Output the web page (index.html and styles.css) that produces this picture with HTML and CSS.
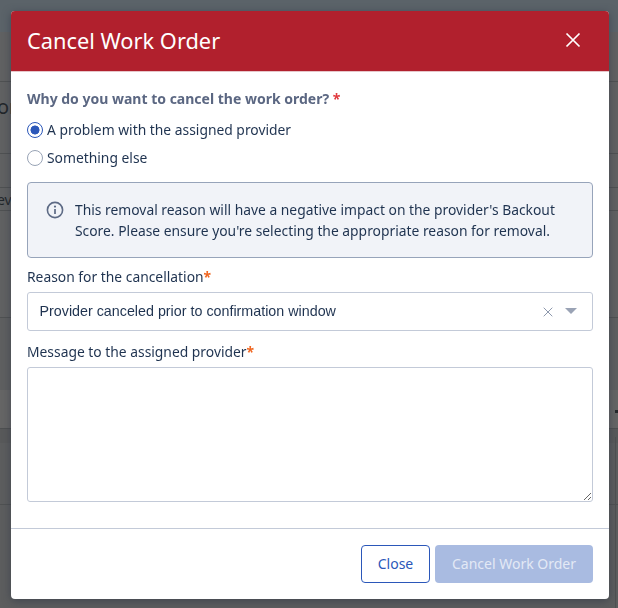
FILE: index.html
```html
<!DOCTYPE html>
<html lang="en">
<head>
<meta charset="utf-8">
<title>Cancel Work Order</title>
<link rel="stylesheet" href="styles.css">
</head>
<body>
<div class="backdrop">
  <div class="bg-row bg-top"></div>
  <div class="bg-row bg-a"></div>
  <div class="bg-row bg-b"><span class="bg-text bg-text-or">or</span></div>
  <div class="bg-row bg-c"></div>
  <div class="bg-row bg-d"><span class="bg-text bg-text-ev">ev</span></div>
  <div class="bg-row bg-e"></div>
  <div class="bg-row bg-f"></div>
  <div class="bg-row bg-g"></div>
  <div class="bg-row bg-h"></div>
  <div class="bg-row bg-i"></div>
  <div class="bg-row bg-j"></div>
  <div class="bg-rule"></div>
  <div class="bg-mark"></div>
</div>
<div class="modal">
  <header class="modal-header">
    <h1 class="modal-title">Cancel Work Order</h1>
    <button class="icon-btn" type="button" aria-label="Close">
      <svg width="16" height="16" viewBox="0 0 16 16"><path d="M1.5 1.5l13 13M14.5 1.5l-13 13" stroke="#fff" stroke-width="1.7" fill="none"/></svg>
    </button>
  </header>
  <div class="modal-body">
    <div class="question">Why do you want to cancel the work order? <span class="req-red">*</span></div>
    <label class="radio-row radio-first"><input class="radio" type="radio" name="why" checked><span>A problem with the assigned provider</span></label>
    <label class="radio-row"><input class="radio" type="radio" name="why"><span>Something else</span></label>
    <div class="notice">
      <svg class="notice-icon" width="18" height="18" viewBox="0 0 18 18"><circle cx="9" cy="9" r="7.6" fill="none" stroke="#5d6a85" stroke-width="1.6"/><circle cx="9" cy="5.6" r="1.1" fill="#5d6a85"/><path d="M9 8v5" stroke="#5d6a85" stroke-width="1.7" fill="none"/></svg>
      <p class="notice-text">This removal reason will have a negative impact on the provider's Backout Score. Please ensure you're selecting the appropriate reason for removal.</p>
    </div>
    <div class="field-label label-reason">Reason for the cancellation<span class="req">*</span></div>
    <div class="select">
      <span class="select-value">Provider canceled prior to confirmation window</span>
      <svg class="select-clear" width="10" height="10" viewBox="0 0 10 10"><path d="M.7.7l8.6 8.6M9.3.7L.7 9.3" stroke="#8d98ad" stroke-width="1" fill="none"/></svg>
      <svg class="select-caret" width="12" height="6" viewBox="0 0 12 6"><path d="M0 0h12L6 6z" fill="#9aa3b5"/></svg>
    </div>
    <div class="field-label label-message">Message to the assigned provider<span class="req">*</span></div>
    <textarea class="message"></textarea>
  </div>
  <footer class="modal-footer">
    <button class="btn btn-outline" type="button">Close</button>
    <button class="btn btn-disabled" type="button">Cancel Work Order</button>
  </footer>
</div>
</body>
</html>
```
FILE: styles.css
```css
* { box-sizing: border-box; }
html, body { margin: 0; height: 100%; overflow: hidden; }
body { font-family: "Noto Sans", sans-serif; font-size: 13.85px; color: #1f3350; background: #5f6061; }

.backdrop { position: relative; display: flex; flex-direction: column; height: 608px; }
.bg-row { flex: none; overflow: hidden; border-bottom: 1px solid #4f5152; background: #606162; }
.bg-top { height: 32px; background: #5b6369; border-bottom: 0; }
.bg-a { height: 50px; }
.bg-b { height: 72px; padding-top: 13px; }
.bg-c { height: 34px; }
.bg-d { height: 23px; padding-top: 2px; }
.bg-e { height: 107px; }
.bg-f { height: 72px; border-bottom: 0; background: #5e5f60; }
.bg-g { height: 39px; background: #656565; border-bottom: 1px solid #4e5051; }
.bg-h { height: 14px; border-bottom: 0; background: #58595a; }
.bg-i { height: 62px; background: #5c5d5e; }
.bg-j { flex: 1; border-bottom: 0; background: #5c5d5e; }
.bg-text { display: block; color: #22262a; }
.bg-text-or { margin-left: -3px; font-size: 20px; line-height: 24px; }
.bg-text-ev { margin-left: -3px; font-size: 14px; line-height: 20px; }
.bg-rule { position: absolute; left: 615px; top: 437px; bottom: 0; width: 1px; background: #4f5152; }
.bg-mark { position: absolute; left: 615px; top: 410px; width: 3px; height: 3px; background: #26282b; }

.modal {
  position: fixed; left: 11px; top: 11px; width: 598px; height: 588px;
  display: flex; flex-direction: column;
  background: #fff; border-radius: 4px; overflow: hidden;
  box-shadow: 0 2px 8px rgba(40, 50, 65, .55);
}
.modal-header {
  flex: none; height: 61px; padding: 0 16px;
  display: flex; align-items: center; justify-content: space-between;
  background: #b1202d; border-bottom: 1px solid #e6c6ca;
}
.modal-title { margin: 0; font-size: 21.8px; font-weight: 400; line-height: 28px; color: #fff; }
.icon-btn { border: 0; padding: 0; background: none; margin: 0 12px 3px 0; width: 16px; height: 16px; display: block; }
.icon-btn svg { display: block; }

.modal-body { flex: 1; padding: 16px 16px 0; display: flex; flex-direction: column; }
.question { font-size: 14px; font-weight: 700; color: #5b6782; line-height: 20px; height: 20px; margin-bottom: 11px; margin-top: 1px; }
.req-red { color: #e0393e; font-weight: 700; }
.req { color: #f0651f; font-weight: 700; }

.radio-row { display: flex; align-items: center; gap: 4px; height: 20px; line-height: 20px; margin-bottom: 8px; }
.radio {
  appearance: none; margin: 0; width: 16px; height: 16px; flex: none;
  border: 1.5px solid #98a3b5; border-radius: 50%; background: #fff;
}
.radio:checked { border: 1.5px solid #2b57b9; background: radial-gradient(circle, #2b57b9 0 4.2px, #fff 4.8px); }

.notice {
  display: flex; align-items: flex-start; gap: 11px; height: 76px;
  margin-top: 6px; padding: 17px 18px 16px 18px;
  background: #f1f3f8; border: 1px solid #97a4ba; border-radius: 4px;
}
.notice-icon { flex: none; margin-top: 1px; }
.notice-text { margin: -1px 0 0; line-height: 21px; }

.field-label { line-height: 20px; height: 20px; }
.label-reason { margin-top: 9px; margin-bottom: 5px; }
.label-message { margin-top: 11px; margin-bottom: 5px; }

.select {
  display: flex; align-items: center; height: 39px; padding: 0 14px 0 11.5px;
  border: 1px solid #c3cad8; border-radius: 3px; background: #fff;
}
.select-value { flex: 1; margin-top: -1px; font-family: "Liberation Sans", Arial, sans-serif; font-size: 14.3px; }
.select-clear { flex: none; margin-right: 12px; }
.select-caret { flex: none; margin-bottom: 2px; margin-right: 1px; }

.message {
  display: block; width: 100%; height: 135px; margin: 0; padding: 8px 12px;
  border: 1px solid #c3cad8; border-radius: 3px; background: #fff; outline: 0;
  font: inherit; color: inherit; resize: vertical;
}

.modal-footer {
  flex: none; height: 71px; padding: 16px;
  display: flex; justify-content: flex-end; gap: 5px;
  border-top: 1px solid #c3cad8;
}
.btn { height: 38px; border-radius: 4px; font-family: inherit; font-size: 14px; line-height: 20px; padding: 0; }
.btn-outline { width: 69px; background: #fff; color: #2b57b9; border: 1px solid #2b57b9; }
.btn-disabled { width: 158px; background: #a9bbe1; color: #e3e9f5; border: 0; }
```
